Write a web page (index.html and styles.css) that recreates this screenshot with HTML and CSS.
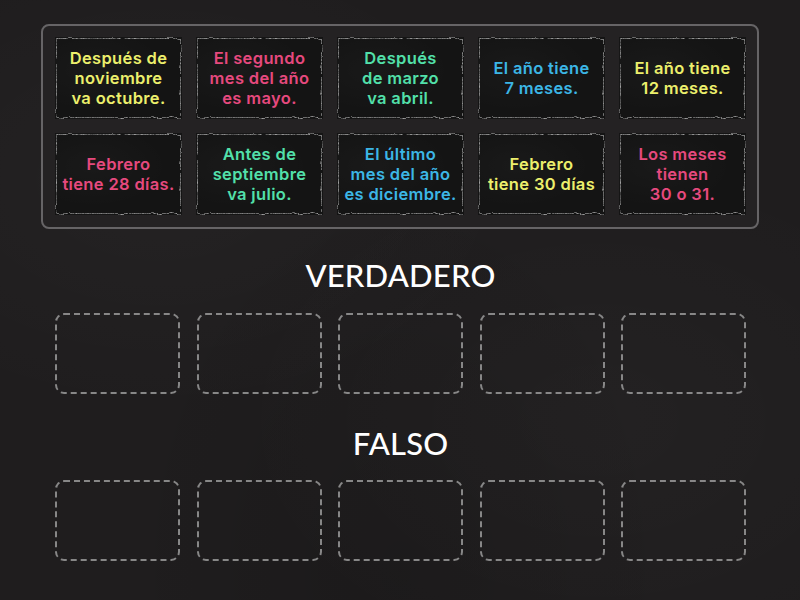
FILE: index.html
```html
<!DOCTYPE html>
<html lang="es">
<head>
<meta charset="utf-8">
<title>Verdadero o falso</title>
<link rel="stylesheet" href="styles.css">
</head>
<body>
<svg class="defs" width="0" height="0" aria-hidden="true">
  <filter id="chalk" x="-5%" y="-5%" width="110%" height="110%">
    <feTurbulence type="fractalNoise" baseFrequency="0.1 0.1" numOctaves="2" seed="7" result="noise"/>
    <feDisplacementMap in="SourceGraphic" in2="noise" scale="3.5" xChannelSelector="R" yChannelSelector="G" result="wobble"/>
    <feTurbulence type="fractalNoise" baseFrequency="0.6" numOctaves="1" seed="2" result="grain"/>
    <feColorMatrix in="grain" type="matrix" values="0 0 0 0 1  0 0 0 0 1  0 0 0 0 1  0 0 0 1.5 -0.15" result="grainA"/>
    <feComposite in="wobble" in2="grainA" operator="in"/>
  </filter>
</svg>
<main class="page">
  <section class="tray">
    <div class="card yellow">Después de<br>noviembre<br>va octubre.</div>
    <div class="card pink">El segundo<br>mes del año<br>es mayo.</div>
    <div class="card green">Después<br>de marzo<br>va abril.</div>
    <div class="card blue">El año tiene<br>7 meses.</div>
    <div class="card yellow">El año tiene<br>12 meses.</div>
    <div class="card pink">Febrero<br>tiene 28 días.</div>
    <div class="card green">Antes de<br>septiembre<br>va julio.</div>
    <div class="card blue">El último<br>mes del año<br>es diciembre.</div>
    <div class="card yellow">Febrero<br>tiene 30 días</div>
    <div class="card pink">Los meses<br>tienen<br>30 o 31.</div>
  </section>

  <section class="group first">
    <h2 class="title">VERDADERO</h2>
    <div class="zones">
      <div class="zone"></div><div class="zone"></div><div class="zone"></div><div class="zone"></div><div class="zone"></div>
    </div>
  </section>

  <section class="group second">
    <h2 class="title">FALSO</h2>
    <div class="zones">
      <div class="zone"></div><div class="zone"></div><div class="zone"></div><div class="zone"></div><div class="zone"></div>
    </div>
  </section>
</main>
</body>
</html>
```

FILE: styles.css
```css
html, body {
  margin: 0;
  padding: 0;
}
body {
  width: 800px;
  height: 600px;
  overflow: hidden;
  background-color: #1f1d1e;
  background-image:
    radial-gradient(ellipse at 20% 30%, rgba(255,255,255,0.025), transparent 40%),
    radial-gradient(ellipse at 75% 70%, rgba(255,255,255,0.02), transparent 45%),
    radial-gradient(ellipse at 50% 95%, rgba(0,0,0,0.12), transparent 50%);
  font-family: "Lato", "Noto Sans", "DejaVu Sans", sans-serif;
}
.defs {
  position: absolute;
  width: 0;
  height: 0;
}
.page {
  display: flex;
  flex-direction: column;
  padding: 24px 41px 0 41px;
}
.tray {
  width: 691px;
  display: grid;
  grid-template-columns: repeat(5, 127px);
  grid-auto-rows: 82px;
  gap: 14px;
  padding: 11px 11px 12px 12px;
  border: 2px solid #666466;
  border-radius: 8px;
  background: #242223;
}
.card {
  position: relative;
  display: flex;
  align-items: center;
  justify-content: center;
  text-align: center;
  font-family: "Inter", "Lato", sans-serif;
  font-size: 16.5px;
  line-height: 20px;
  font-weight: 600;
  letter-spacing: 0.35px;
  white-space: nowrap;
  background: #141414;
  background-image:
    radial-gradient(ellipse at 30% 40%, rgba(255,255,255,0.025), transparent 60%);
}
.card::before {
  content: "";
  position: absolute;
  inset: 1px;
  border: 1.6px solid rgba(205,205,205,0.75);
  filter: url(#chalk);
  pointer-events: none;
}
.yellow { color: #ecef6c; }
.pink   { color: #e6497e; }
.green  { color: #52e0aa; }
.blue   { color: #3cb6e6; }

.group {
  display: flex;
  flex-direction: column;
  align-items: stretch;
}
.group.first { margin-top: 26px; }
.group.second { margin-top: 29px; }
.title {
  margin: 0;
  text-align: center;
  color: #ffffff;
  font-size: 31px;
  line-height: 40px;
  font-weight: 500;
  letter-spacing: 0.2px;
  padding-left: 1px;
}
.zones {
  margin-top: 18px;
  padding-left: 14px;
  display: grid;
  grid-template-columns: repeat(5, 125px);
  grid-auto-rows: 81px;
  column-gap: 16.5px;
}
.group.second .zones { margin-top: 17px; }
.zone {
  box-sizing: border-box;
  border: 2px dashed rgba(155,155,155,0.85);
  border-radius: 9px;
}
```
